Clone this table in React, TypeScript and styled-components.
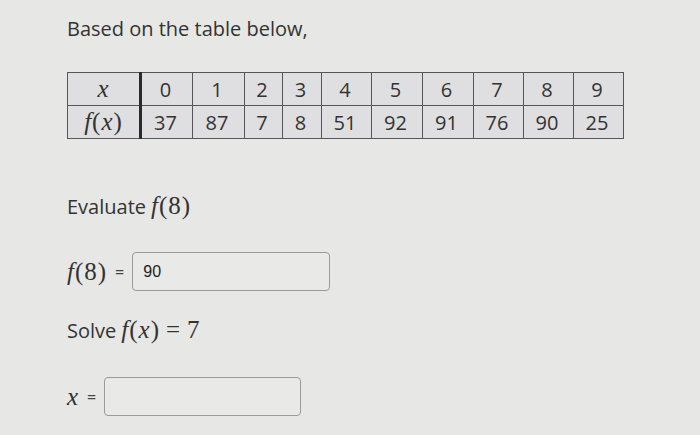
import styled, { createGlobalStyle } from "styled-components";

const GlobalStyle = createGlobalStyle`
	html, body {
		margin: 0;
		padding: 0;
		background: #e7e7e5;
	}
	body {
		font-family: "Open Sans", "Liberation Sans", sans-serif;
		color: #333;
	}
`;

const Page = styled.div`
	width: 700px;
	height: 435px;
	box-sizing: border-box;
	padding: 15px 0 0 67px;
	display: flex;
	flex-direction: column;
	overflow: hidden;
`;

const Intro = styled.p`
	margin: 0;
	font-size: 20px;
	line-height: 27px;
`;

const Table = styled.table`
	margin-top: 30px;
	border-collapse: collapse;
	background: #dfdfe1;
	font-size: 20px;
	width: 556px;
	table-layout: fixed;
`;

const Cell = styled.td<{ $w: number; $head?: boolean }>`
	width: ${(p) => p.$w}px;
	height: 33px;
	padding: 0 ${(p) => (p.$head ? 0 : 3)}px 0 0;
	border: 1.5px solid #55555a;
	border-right: ${(p) => (p.$head ? "3px solid #2a2a2e" : "1.5px solid #55555a")};
	text-align: center;
	color: #333;
	box-sizing: border-box;
`;

const MathVar = styled.span`
	font-family: "Liberation Serif", "DejaVu Serif", serif;
	font-style: italic;
	font-size: 1.25em;
	letter-spacing: 1px;
`;

const MathNum = styled.span`
	font-family: "Liberation Serif", "DejaVu Serif", serif;
	font-size: 1.25em;
	letter-spacing: 1px;
`;

const MathOp = styled(MathNum)`
	margin: 0 6px;
`;

const Prompt = styled.p<{ $top: number }>`
	margin: ${(p) => p.$top}px 0 0 0;
	font-size: 20px;
	line-height: 27px;
	display: flex;
	align-items: baseline;
	gap: 5px;
`;

const AnswerRow = styled.div<{ $top: number; $gap: number }>`
	margin-top: ${(p) => p.$top}px;
	display: flex;
	align-items: center;
	gap: ${(p) => p.$gap}px;
	font-size: 20px;
`;

const Equals = styled.span`
	font-size: 16px;
	color: #444;
`;

const Input = styled.div<{ $w: number }>`
	width: ${(p) => p.$w}px;
	height: 39px;
	box-sizing: border-box;
	border: 1.5px solid #9a9a9a;
	border-radius: 4px;
	background: #e9e9e8;
	display: flex;
	align-items: center;
	padding-left: 10px;
	font-family: "Liberation Sans", Arial, sans-serif;
	font-size: 16px;
	color: #222;
`;

const xs = [0, 1, 2, 3, 4, 5, 6, 7, 8, 9];
const fx = [37, 87, 7, 8, 51, 92, 91, 76, 90, 25];
const widths = [52, 52, 38, 39, 50, 51, 51, 50, 50, 50];

function F({ arg }: { arg: string }) {
	return (
		<span>
			<MathVar>f</MathVar>
			<MathNum>(</MathNum>
			{arg === "x" ? <MathVar>x</MathVar> : <MathNum>{arg}</MathNum>}
			<MathNum>)</MathNum>
		</span>
	);
}

export default function App() {
	return (
		<>
			<GlobalStyle />
			<Page>
				<Intro>Based on the table below,</Intro>
				<Table>
					<tbody>
						<tr>
							<Cell $w={73} $head>
								<MathVar>x</MathVar>
							</Cell>
							{xs.map((v, i) => (
								<Cell key={v} $w={widths[i]}>
									{v}
								</Cell>
							))}
						</tr>
						<tr>
							<Cell $w={73} $head>
								<F arg="x" />
							</Cell>
							{fx.map((v, i) => (
								<Cell key={i} $w={widths[i]}>
									{v}
								</Cell>
							))}
						</tr>
					</tbody>
				</Table>
				<Prompt $top={53}>
					Evaluate <F arg="8" />
				</Prompt>
				<AnswerRow $top={32} $gap={8}>
					<F arg="8" />
					<Equals>=</Equals>
					<Input $w={198}>90</Input>
				</AnswerRow>
				<Prompt $top={25}>
					<span>Solve</span>
					<span>
						<F arg="x" />
						<MathOp>=</MathOp>
						<MathNum>7</MathNum>
					</span>
				</Prompt>
				<AnswerRow $top={33} $gap={8}>
					<MathVar>x</MathVar>
					<Equals>=</Equals>
					<Input $w={197} />
				</AnswerRow>
			</Page>
		</>
	);
}
